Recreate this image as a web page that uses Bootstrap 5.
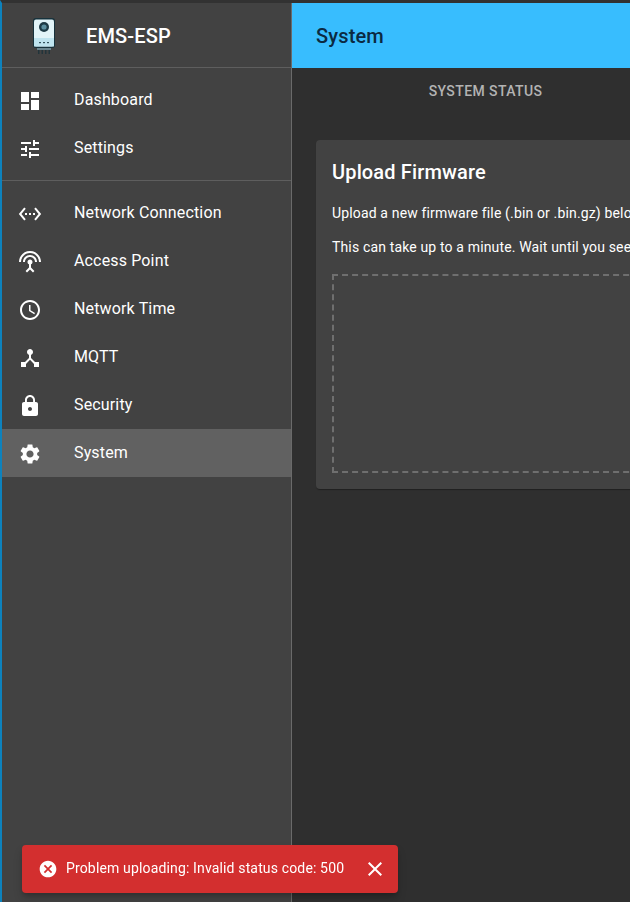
<!DOCTYPE html>
<html lang="en">

<head>
  <meta charset="UTF-8">
  <meta name="viewport" content="width=device-width, initial-scale=1.0">
  <title>EMS-ESP</title>
  <link href="https://cdn.jsdelivr.net/npm/bootstrap@5.3.3/dist/css/bootstrap.min.css" rel="stylesheet">
  <style>
    html, body {
      height: 902px;
      overflow: hidden;
    }
    body {
      background: #2f2f2f;
      border-left: 2px solid #0d82bd;
      border-top: 3px solid #323232;
      font-family: Roboto, "Liberation Sans", sans-serif;
      color: #fff;
    }
    .shell {
      height: 899px;
      width: 628px;
      overflow: hidden;
    }
    .drawer {
      width: 290px;
      flex: none;
      background: #424242;
      border-right: 1px solid #6a6a6a;
    }
    .brand {
      height: 65px;
      border-bottom: 1px solid #5e5e5e;
      padding: 2px 0 0 84px;
      font-size: 20px;
      font-weight: 500;
      letter-spacing: .15px;
      position: relative;
    }
    .brand svg {
      position: absolute;
      left: 29px;
      top: 14px;
    }
    .menu {
      padding: 8px 0;
    }
    .menu + .menu {
      border-top: 1px solid #5e5e5e;
    }
    .menu-item {
      height: 48px;
      padding-left: 16px;
      gap: 32px;
      font-size: 16px;
      letter-spacing: .15px;
      color: #fff;
      text-decoration: none;
    }
    .menu-item.active {
      background: #616161;
    }
    .menu-item svg {
      width: 24px;
      height: 24px;
      fill: #fff;
      flex: none;
      margin-top: 2px;
    }
    .appbar {
      height: 65px;
      background: #38bdfe;
      color: #0b2a42;
      font-size: 20px;
      font-weight: 500;
      letter-spacing: .15px;
      padding-left: 24px;
    }
    .tab {
      width: 387px;
      height: 46px;
      font-size: 14px;
      font-weight: 500;
      letter-spacing: .4px;
      color: #b3b3b3;
      text-transform: uppercase;
    }
    .panel {
      margin: 26px 0 0 24px;
      width: 560px;
      height: 349px;
      background: #424242;
      border: 0;
      border-radius: 4px;
      padding: 16px;
      box-shadow: 0 2px 1px -1px rgba(0,0,0,.2), 0 1px 1px rgba(0,0,0,.14);
      color: #fff;
    }
    .panel h6 {
      font-size: 20px;
      font-weight: 500;
      letter-spacing: .15px;
      line-height: 32px;
      margin-bottom: 15px;
    }
    .panel p {
      font-size: 14px;
      letter-spacing: .15px;
      line-height: 21px;
      margin-bottom: 13px;
      white-space: nowrap;
    }
    .dropzone {
      height: 199px;
      flex: none;
      margin-top: 3px;
      border: 2px dashed #6f6f6f;
    }
    .snack {
      position: fixed;
      left: 22px;
      top: 845px;
      width: 376px;
      height: 48px;
      background: #d32f2f;
      border-radius: 4px;
      padding: 0 11px 0 16px;
      font-size: 14px;
      letter-spacing: .15px;
      color: #fff;
      box-shadow: 0 3px 5px -1px rgba(0,0,0,.2), 0 6px 10px rgba(0,0,0,.14);
    }
    .snack svg {
      fill: #fff;
      flex: none;
    }
    .snack .snack-text {
      margin-left: 8px;
      padding-bottom: 2px;
      white-space: nowrap;
    }
    .snack .snack-close {
      margin-left: auto;
    }
  </style>
</head>

<body>
  <div class="shell d-flex">
    <aside class="drawer d-flex flex-column">
      <div class="brand d-flex align-items-center">
        <svg width="26" height="38" viewBox="0 0 26 38">
          <!-- boiler logo -->
          <rect x="2" y="1" width="22" height="30" rx="3" fill="#17323c"/>
          <rect x="3" y="2.5" width="20" height="27" rx="2" fill="#e2f4f8"/>
          <rect x="3" y="21" width="20" height="8.5" fill="#bfe4ef"/>
          <circle cx="13" cy="10" r="5" fill="#1d3a45"/>
          <circle cx="13" cy="10" r="2.6" fill="#5c8f9f"/>
          <rect x="8" y="25" width="2" height="1.2" fill="#33535e"/>
          <rect x="12" y="25" width="2" height="1.2" fill="#33535e"/>
          <rect x="16" y="25" width="2" height="1.2" fill="#33535e"/>
          <rect x="6" y="31" width="14" height="2" fill="#6c8791"/>
          <rect x="7" y="33" width="1.5" height="4" fill="#22343b"/>
          <rect x="10.5" y="33" width="1.5" height="4" fill="#22343b"/>
          <rect x="14" y="33" width="1.5" height="4" fill="#22343b"/>
          <rect x="17.5" y="33" width="1.5" height="4" fill="#22343b"/>
        </svg>
        EMS-ESP
      </div>
      <nav class="menu">
        <a class="menu-item d-flex align-items-center" href="#"><svg viewBox="0 0 24 24"><path d="M3 13h8V3H3v10zm0 8h8v-6H3v6zm10 0h8V11h-8v10zm0-18v6h8V3h-8z"/></svg>Dashboard</a>
        <a class="menu-item d-flex align-items-center" href="#"><svg viewBox="0 0 24 24"><path d="M3 17v2h6v-2H3zM3 5v2h10V5H3zm10 16v-2h8v-2h-8v-2h-2v6h2zM7 9v2H3v2h4v2h2V9H7zm14 4v-2H11v2h10zm-6-4h2V7h4V5h-4V3h-2v6z"/></svg>Settings</a>
      </nav>
      <nav class="menu">
        <a class="menu-item d-flex align-items-center" href="#"><svg viewBox="0 0 24 24"><path d="M7.77 6.76L6.23 5.48.82 12l5.41 6.52 1.54-1.28L3.42 12l4.35-5.24zM7 13h2v-2H7v2zm10-2h-2v2h2v-2zm-6 2h2v-2h-2v2zm6.77-7.52l-1.54 1.28L20.58 12l-4.35 5.24 1.54 1.28L23.18 12l-5.41-6.52z"/></svg>Network Connection</a>
        <a class="menu-item d-flex align-items-center" href="#"><svg viewBox="0 0 24 24"><path d="M12 5c-3.87 0-7 3.13-7 7h2c0-2.76 2.24-5 5-5s5 2.24 5 5h2c0-3.87-3.13-7-7-7zm1 9.29c.88-.39 1.5-1.26 1.5-2.29 0-1.38-1.12-2.5-2.5-2.5S9.5 10.62 9.5 12c0 1.02.62 1.9 1.5 2.29v3.3L7.59 21 9 22.41l3-3 3 3L16.41 21 13 17.59v-3.3zM12 1C5.93 1 1 5.93 1 12h2c0-4.97 4.03-9 9-9s9 4.03 9 9h2c0-6.07-4.93-11-11-11z"/></svg>Access Point</a>
        <a class="menu-item d-flex align-items-center" href="#"><svg viewBox="0 0 24 24"><path d="M11.99 2C6.47 2 2 6.48 2 12s4.47 10 9.99 10C17.52 22 22 17.52 22 12S17.52 2 11.99 2zM12 20c-4.42 0-8-3.58-8-8s3.58-8 8-8 8 3.58 8 8-3.58 8-8 8zm.5-13H11v6l5.25 3.15.75-1.23-4.5-2.67z"/></svg>Network Time</a>
        <a class="menu-item d-flex align-items-center" href="#"><svg viewBox="0 0 24 24"><path d="M17 16l-4-4V8.82C14.16 8.4 15 7.3 15 6c0-1.66-1.34-3-3-3S9 4.34 9 6c0 1.3.84 2.4 2 2.82V12l-4 4H3v5h5v-3.05l4-4.2 4 4.2V21h5v-5h-4z"/></svg>MQTT</a>
        <a class="menu-item d-flex align-items-center" href="#"><svg viewBox="0 0 24 24"><path d="M18 8h-1V6c0-2.76-2.24-5-5-5S7 3.24 7 6v2H6c-1.1 0-2 .9-2 2v10c0 1.1.9 2 2 2h12c1.1 0 2-.9 2-2V10c0-1.1-.9-2-2-2zm-6 9c-1.1 0-2-.9-2-2s.9-2 2-2 2 .9 2 2-.9 2-2 2zm3.1-9H8.9V6c0-1.71 1.39-3.1 3.1-3.1 1.71 0 3.1 1.39 3.1 3.1v2z"/></svg>Security</a>
        <a class="menu-item active d-flex align-items-center" href="#"><svg viewBox="0 0 24 24"><path d="M19.14 12.94c.04-.3.06-.61.06-.94 0-.32-.02-.64-.07-.94l2.03-1.58c.18-.14.23-.41.12-.61l-1.92-3.32c-.12-.22-.37-.29-.59-.22l-2.39.96c-.5-.38-1.03-.7-1.62-.94l-.36-2.54c-.04-.24-.24-.41-.48-.41h-3.84c-.24 0-.43.17-.47.41l-.36 2.54c-.59.24-1.13.57-1.62.94l-2.39-.96c-.22-.08-.47 0-.59.22L2.74 8.87c-.12.21-.08.47.12.61l2.03 1.58c-.05.3-.09.63-.09.94s.02.64.07.94l-2.03 1.58c-.18.14-.23.41-.12.61l1.92 3.32c.12.22.37.29.59.22l2.39-.96c.5.38 1.03.7 1.62.94l.36 2.54c.05.24.24.41.48.41h3.84c.24 0 .44-.17.47-.41l.36-2.54c.59-.24 1.13-.56 1.62-.94l2.39.96c.22.08.47 0 .59-.22l1.92-3.32c.12-.22.07-.47-.12-.61l-2.01-1.58zM12 15.6c-1.98 0-3.6-1.62-3.6-3.6s1.62-3.6 3.6-3.6 3.6 1.62 3.6 3.6-1.62 3.6-3.6 3.6z"/></svg>System</a>
      </nav>
    </aside>

    <main class="flex-grow-1">
      <header class="appbar d-flex align-items-center">System</header>
      <div class="tab d-flex align-items-center justify-content-center">System Status</div>
      <section class="card panel">
        <h6>Upload Firmware</h6>
        <p>Upload a new firmware file (.bin or .bin.gz) belo</p>
        <p>This can take up to a minute. Wait until you see</p>
        <div class="dropzone"></div>
      </section>
    </main>
  </div>

  <div class="snack d-flex align-items-center">
    <svg width="20" height="20" viewBox="0 0 24 24"><path d="M12 2C6.47 2 2 6.47 2 12s4.47 10 10 10 10-4.47 10-10S17.53 2 12 2zm5 13.59L15.59 17 12 13.41 8.41 17 7 15.59 10.59 12 7 8.41 8.41 7 12 10.59 15.59 7 17 8.41 13.41 12 17 15.59z"/></svg>
    <span class="snack-text">Problem uploading: Invalid status code: 500</span>
    <svg class="snack-close" width="24" height="24" viewBox="0 0 24 24"><path d="M19 6.41L17.59 5 12 10.59 6.41 5 5 6.41 10.59 12 5 17.59 6.41 19 12 13.41 17.59 19 19 17.59 13.41 12z"/></svg>
  </div>

  <script src="https://cdn.jsdelivr.net/npm/bootstrap@5.3.3/dist/js/bootstrap.bundle.min.js"></script>
</body>

</html>
